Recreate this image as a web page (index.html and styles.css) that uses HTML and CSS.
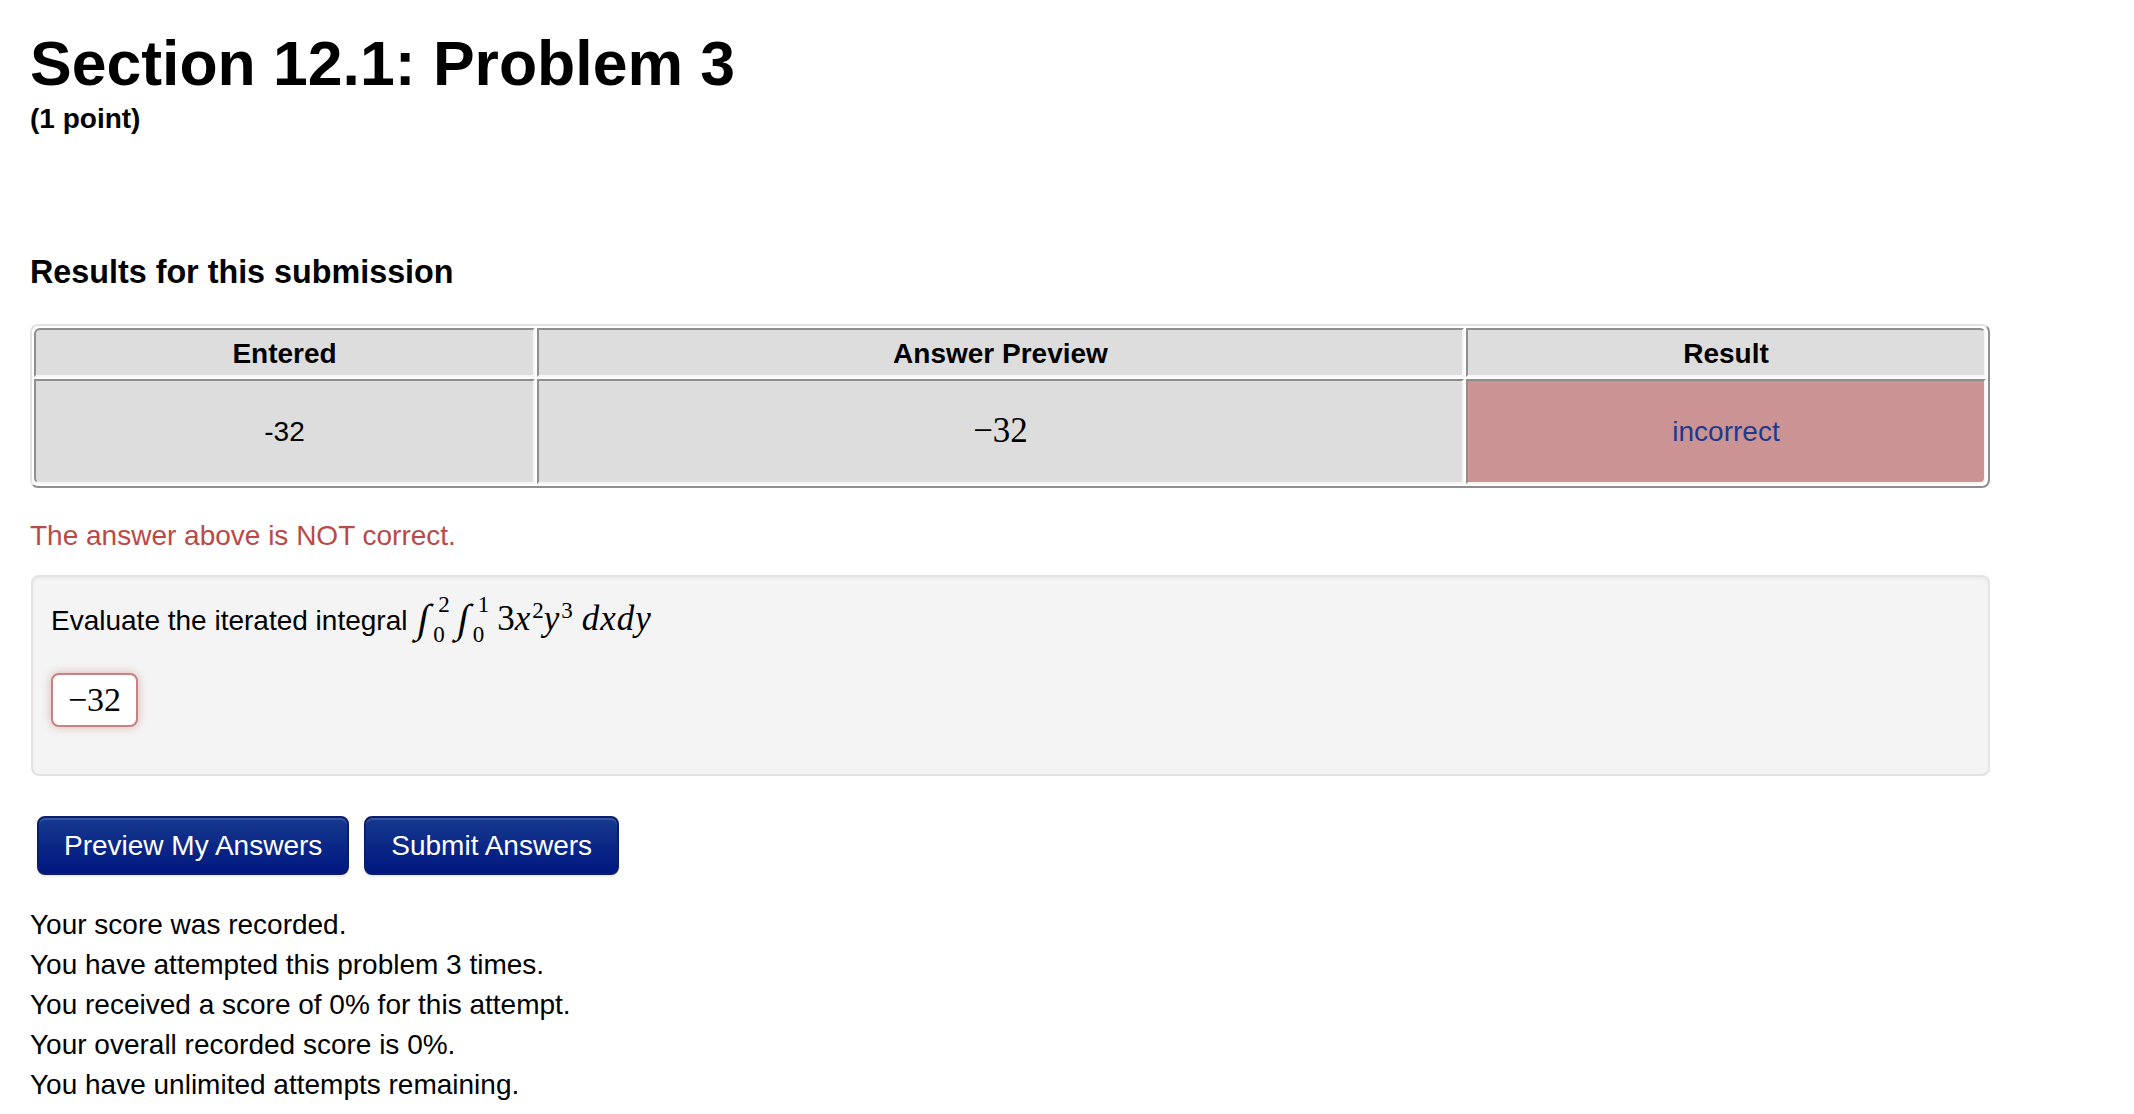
FILE: index.html
```html
<!DOCTYPE html>
<html lang="en">
<head>
<meta charset="utf-8">
<title>Section 12.1: Problem 3</title>
<link rel="stylesheet" href="styles.css">
</head>
<body>
<div class="page">
  <h1 class="title">Section 12.1: Problem 3</h1>
  <p class="points">(1 point)</p>

  <h2 class="results-head">Results for this submission</h2>

  <table class="attempt">
    <thead>
      <tr>
        <th class="c1">Entered</th>
        <th class="c2">Answer Preview</th>
        <th class="c3">Result</th>
      </tr>
    </thead>
    <tbody>
      <tr>
        <td>-32</td>
        <td><span class="mathnum preview">&minus;32</span></td>
        <td class="bad"><span class="bad-text">incorrect</span></td>
      </tr>
    </tbody>
  </table>

  <p class="wrong">The answer above is NOT correct.</p>

  <div class="well">
    <p class="prompt">Evaluate the iterated integral <span class="math"><span class="int">&int;</span><span class="lims"><span class="lsup">2</span><span class="lsub">0</span></span><span class="int">&int;</span><span class="lims"><span class="lsup">1</span><span class="lsub">0</span></span><span class="mn">3</span><span class="mi">x</span><span class="pw">2</span><span class="mi">y</span><span class="pw">3</span><span class="mi dd">d</span><span class="mi">x</span><span class="mi">d</span><span class="mi">y</span></span></p>
    <div class="answer"><span class="mathnum">&minus;32</span></div>
  </div>

  <div class="buttons">
    <button class="btn" type="button">Preview My Answers</button>
    <button class="btn" type="button">Submit Answers</button>
  </div>

  <div class="status">
    <div>Your score was recorded.</div>
    <div>You have attempted this problem 3 times.</div>
    <div>You received a score of 0% for this attempt.</div>
    <div>Your overall recorded score is 0%.</div>
    <div>You have unlimited attempts remaining.</div>
  </div>
</div>
</body>
</html>
```

FILE: styles.css
```css
html, body {
  margin: 0;
  padding: 0;
  background: #ffffff;
}

body {
  font-family: "Liberation Sans", Arial, Helvetica, sans-serif;
  font-size: 28px;
  line-height: 40px;
  color: #000000;
}

.page {
  width: 1960px;
  padding: 30px 0 0 30px;
}

.title {
  margin: 0;
  font-size: 62.5px;
  line-height: 66px;
  font-weight: bold;
}

.points {
  margin: 3px 0 0;
  font-weight: bold;
}

.results-head {
  margin: 113px 0 32px;
  font-size: 32.3px;
  line-height: 40px;
  font-weight: bold;
}

/* results table */
.attempt {
  width: 1960px;
  table-layout: fixed;
  border-collapse: separate;
  border-spacing: 2px;
  border: 2px solid;
  border-color: #e2e2e2 #8f8f8f #8f8f8f #e2e2e2;
  border-radius: 8px;
  margin: 0 0 28px;
}

.attempt th,
.attempt td {
  box-sizing: border-box;
  background: #dddddd;
  border: 2px solid;
  border-color: #8f8f8f #f6f6f6 #f6f6f6 #8f8f8f;
  text-align: center;
  font-weight: normal;
}

.attempt th {
  font-weight: bold;
  padding: 4px 10px 1px;
}

.attempt td {
  padding: 30px 10px 29px;
}

.attempt .c1 { width: 501px; border-top-left-radius: 6px; }
.attempt .c2 { width: 927px; }
.attempt .c3 { border-top-right-radius: 6px; }
.attempt tbody td:first-child { border-bottom-left-radius: 6px; }
.attempt tbody td:last-child { border-bottom-right-radius: 6px; }

.attempt td.bad {
  background: #cb9393;
}

.bad-text {
  color: #1f3a8c;
}

.mathnum {
  font-family: "Liberation Serif", "Times New Roman", serif;
  font-size: 35px;
}

.wrong {
  margin: 0;
  color: #b94a48;
}

/* problem well */
.well {
  margin-top: 19px;
  margin-left: 1px;
  background: #f4f4f4;
  border: 2px solid #e3e3e3;
  border-radius: 8px;
  padding: 22px 18px 47px;
  box-shadow: inset 0 2px 2px rgba(0, 0, 0, 0.04);
}

.prompt {
  margin: 0;
  height: 40px;
  white-space: nowrap;
}

.math {
  font-family: "Liberation Serif", "Times New Roman", serif;
  font-size: 35px;
  margin-left: 3px;
}

.int {
  display: inline-block;
  font-size: 40px;
  line-height: 0;
  transform: translateY(2px) skewX(-10deg);
}

.lims {
  display: inline-grid;
  font-size: 23px;
  line-height: 0;
  margin: 0 8px 0 9px;
}

.lims > span {
  grid-area: 1 / 1;
}

.lsup {
  transform: translateY(-18px);
}

.lsub {
  transform: translate(-5px, 12px);
}

.mi {
  font-style: italic;
  letter-spacing: 1px;
}

.pw {
  font-size: 23px;
  line-height: 0;
  vertical-align: 12px;
  margin-left: 1px;
}

.dd {
  margin-left: 9px;
}

.answer {
  box-sizing: border-box;
  width: 87px;
  height: 54px;
  margin-top: 34px;
  background: #ffffff;
  border: 2px solid #c88282;
  border-radius: 8px;
  box-shadow: 0 0 10px rgba(190, 80, 80, 0.4);
  text-align: center;
  line-height: 50px;
}

.answer .mathnum {
  font-size: 34px;
}

/* buttons */
.buttons {
  display: flex;
  gap: 15px;
  margin-top: 40px;
  padding-left: 7px;
}

.btn {
  font-family: "Liberation Sans", Arial, Helvetica, sans-serif;
  font-size: 28px;
  line-height: 40px;
  color: #ffffff;
  padding: 7.5px 25px;
  border: 2px solid #0b1d6e;
  border-radius: 8px;
  background: linear-gradient(#16398e, #001780);
  box-shadow: inset 0 2px 0 rgba(255, 255, 255, 0.15), 0 2px 2px rgba(0, 0, 0, 0.08);
  cursor: pointer;
}

.status {
  margin-top: 30px;
}
```
